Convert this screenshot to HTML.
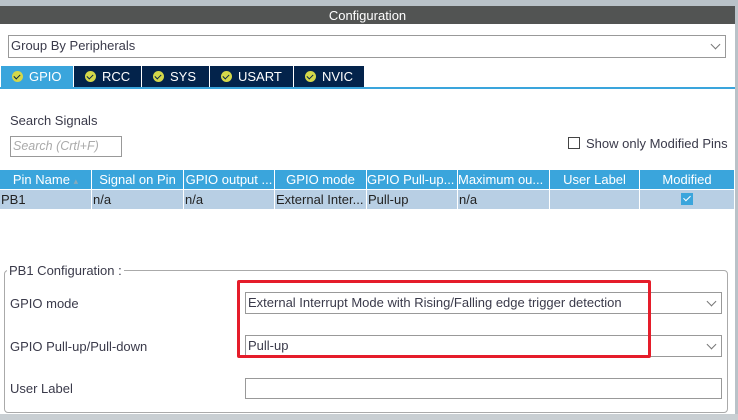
<!DOCTYPE html>
<html><head><style>
*{box-sizing:border-box;margin:0;padding:0}
body{width:738px;height:420px;overflow:hidden;background:#fff;font-family:"Liberation Sans",Arial,sans-serif;font-size:13px;color:#333;position:relative}
.a{position:absolute}
.sel{border:1px solid #999;background:#fff;color:#3a3a4a;padding-left:2px;line-height:20px;font-size:13px}
.chev{position:absolute;right:6px;top:5px;width:7px;height:7px;border-right:1px solid #777;border-bottom:1px solid #777;transform:rotate(45deg)}
.tab{position:absolute;top:66px;height:21px;background:#03234b;color:#fff;font-size:13px;line-height:21px;padding-left:11px}
.tab i{display:inline-block;width:11px;height:11px;border-radius:50%;background:#d4d84a;vertical-align:-1px;margin-right:6px;position:relative}
.tab i:after{content:"";position:absolute;left:3px;top:2px;width:3px;height:5px;border-right:1.5px solid #03234b;border-bottom:1.5px solid #03234b;transform:rotate(45deg)}
.th{position:absolute;top:170px;height:19px;background:#3aa5dc;color:#fff;font-size:13px;line-height:19px;text-align:center;white-space:nowrap;overflow:hidden}
.td{position:absolute;top:190px;height:19px;background:#b8cfe4;color:#222;font-size:13px;line-height:19px;padding-left:1px;white-space:nowrap}
.lbl{position:absolute;left:10px;font-size:13px;color:#3a3a4a}
</style></head><body>
<div class="a" style="left:0;top:0;width:738px;height:6px;background:#b9c2c8"></div>
<div class="a" style="left:0;top:6px;width:735px;height:18px;background:#525453;color:#fff;text-align:center;line-height:19px;font-size:13px">Configuration</div>
<div class="a" style="left:735px;top:0;width:3px;height:420px;background:#b9c2c8"></div>
<div class="a" style="left:0;top:414px;width:738px;height:6px;background:#c9cfd3"></div>

<div class="a sel" style="left:8px;top:35px;width:718px;height:23px">Group By Peripherals<span class="chev"></span></div>

<div class="tab" style="left:1px;width:72px;background:#3aa5dc"><i style="background:#d4d84a"></i>GPIO</div>
<div class="tab" style="left:74px;width:67px"><i></i>RCC</div>
<div class="tab" style="left:142px;width:67px"><i></i>SYS</div>
<div class="tab" style="left:210px;width:83px"><i></i>USART</div>
<div class="tab" style="left:294px;width:70px"><i></i>NVIC</div>
<div class="a" style="left:0;top:87px;width:735px;height:2px;background:#3aa5dc"></div>

<div class="lbl" style="top:113px">Search Signals</div>
<div class="a" style="left:10px;top:136px;width:112px;height:21px;border:1px solid #999;color:#aaa;font-style:italic;font-size:12.5px;line-height:19px;padding-left:2px">Search (Crtl+F)</div>
<div class="a" style="left:568px;top:137px;width:12px;height:12px;border:1px solid #444"></div>
<div class="a" style="left:586px;top:136px;font-size:13px;color:#3a3a4a">Show only Modified Pins</div>

<div class="th" style="left:0;width:91px">Pin Name <span style="color:#8ab;font-size:9px">▴</span></div>
<div class="th" style="left:92px;width:91px">Signal on Pin</div>
<div class="th" style="left:184px;width:90px">GPIO output ...</div>
<div class="th" style="left:275px;width:91px">GPIO mode</div>
<div class="th" style="left:367px;width:90px;text-align:left">GPIO Pull-up...</div>
<div class="th" style="left:458px;width:91px;text-align:left">Maximum ou...</div>
<div class="th" style="left:550px;width:89px">User Label</div>
<div class="th" style="left:640px;width:94px">Modified</div>
<div class="td" style="left:0;width:91px">PB1</div>
<div class="td" style="left:92px;width:91px">n/a</div>
<div class="td" style="left:184px;width:90px">n/a</div>
<div class="td" style="left:275px;width:91px">External Inter...</div>
<div class="td" style="left:367px;width:90px">Pull-up</div>
<div class="td" style="left:458px;width:91px">n/a</div>
<div class="td" style="left:550px;width:89px"></div>
<div class="td" style="left:640px;width:94px"></div>
<div class="a" style="left:681px;top:193px;width:12px;height:12px;background:#3aa5dc"><div style="position:absolute;left:4px;top:1px;width:4px;height:7px;border-right:1.5px solid #fff;border-bottom:1.5px solid #fff;transform:rotate(45deg)"></div></div>

<div class="a" style="left:4px;top:270px;width:724px;height:143px;border:1px solid #aaa;border-radius:4px"></div>
<div class="a" style="left:7px;top:263px;background:#fff;padding:0 2px;font-size:13px;color:#3a3a4a">PB1 Configuration :</div>
<div class="lbl" style="top:296px">GPIO mode</div>
<div class="lbl" style="top:339px">GPIO Pull-up/Pull-down</div>
<div class="lbl" style="top:381px">User Label</div>
<div class="a sel" style="left:245px;top:292px;width:477px;height:22px">External Interrupt Mode with Rising/Falling edge trigger detection<span class="chev"></span></div>
<div class="a sel" style="left:245px;top:335px;width:477px;height:22px">Pull-up<span class="chev"></span></div>
<div class="a sel" style="left:245px;top:378px;width:477px;height:21px"></div>
<div class="a" style="left:237px;top:280px;width:414px;height:78px;border:3px solid #e51d2a;border-radius:2px"></div>
</body></html>
